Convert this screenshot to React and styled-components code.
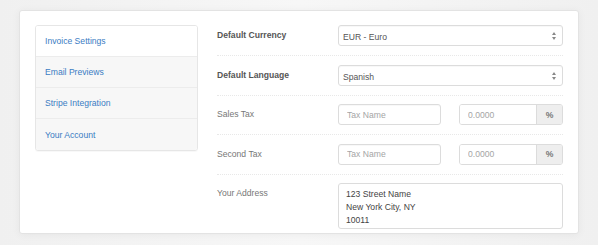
import React from 'react';
import styled, { createGlobalStyle } from 'styled-components';

const GlobalStyle = createGlobalStyle`
  html, body {
    margin: 0;
    padding: 0;
    background: #f4f4f4;
    font-family: "Liberation Sans", Arial, sans-serif;
  }
  * { box-sizing: border-box; }
`

const Page = styled.div`
  width: 598px;
  height: 245px;
  padding: 10px 19px 11px 19px;
  background: linear-gradient(to right, #f0f0f0, #f7f7f7 50%, #f0f0f0);
`
const Card = styled.div`
  display: flex;
  align-items: flex-start;
  gap: 19px;
  height: 224px;
  padding: 14px 15px 0 15px;
  background: #fff;
  border: 1px solid #e3e3e3;
  border-radius: 3px;
  box-shadow: 0 1px 8px rgba(0, 0, 0, 0.05);
  overflow: hidden;
`
const Sidebar = styled.ul`
  flex: 0 0 163px;
  margin: 0;
  padding: 0;
  list-style: none;
  border: 1px solid #e6e6e6;
  border-radius: 3px;
  overflow: hidden;
  box-shadow: 0 1px 1px rgba(0, 0, 0, 0.03);
`
const NavItem = styled.li`
  height: 31px;
  display: flex;
  align-items: center;
  padding-left: 9px;
  font-size: 8.6px;
  color: #3a7cc3;
  background: ${({ active }) => (active ? '#fff' : '#f7f7f7')};
  border-bottom: 1px solid #ececec;
  &:last-child { border-bottom: none; }
`
const Form = styled.div`
  flex: 0 0 346px;
  display: flex;
  flex-direction: column;
`
const Row = styled.div`
  display: grid;
  grid-template-columns: 121px 1fr;
  align-items: start;
  padding-bottom: 9px;
  margin-bottom: 8.5px;
  border-bottom: 1px dotted #e8e8e8;
  &:last-child { border-bottom: none; margin-bottom: 0; }
`
const Label = styled.div`
  line-height: 21px;
  font-size: 8.6px;
  font-weight: ${({ strong }) => (strong ? 700 : 400)};
  color: ${({ strong }) => (strong ? '#555' : '#777')};
`
const SelectBox = styled.div`
  position: relative;
  height: 21px;
  border: 1px solid #dcdcdc;
  border-radius: 3px;
  background: #fff;
  box-shadow: inset 0 1px 1px rgba(0, 0, 0, 0.03);
`
const Select = styled.select`
  appearance: none;
  width: 100%;
  height: 100%;
  border: none;
  background: transparent;
  padding: 0 0 0 4px;
  font-family: inherit;
  font-size: 8.6px;
  color: #555;
  outline: none;
`
const Arrows = styled.svg`
  position: absolute;
  right: 6px;
  top: 6px;
  pointer-events: none;
`
const TaxControls = styled.div`
  display: flex;
  gap: 18px;
`
const Input = styled.input`
  width: ${({ w }) => w}px;
  height: 21px;
  border: 1px solid #dcdcdc;
  border-radius: 3px;
  padding: 0 8px;
  font-family: inherit;
  font-size: 8.6px;
  color: #555;
  box-shadow: inset 0 1px 1px rgba(0, 0, 0, 0.03);
  outline: none;
  &::placeholder { color: #a5a5a5; }
`
const Group = styled.div`
  display: flex;
  width: 104px;
  height: 21px;
  border: 1px solid #dcdcdc;
  border-radius: 3px;
  overflow: hidden;
`
const GroupInput = styled.input`
  flex: 1;
  min-width: 0;
  border: none;
  padding: 0 8px;
  font-family: inherit;
  font-size: 8.6px;
  color: #555;
  outline: none;
  &::placeholder { color: #a5a5a5; }
`
const Addon = styled.span`
  flex: 0 0 26px;
  display: flex;
  align-items: center;
  justify-content: center;
  background: #eee;
  border-left: 1px solid #dcdcdc;
  font-size: 8.6px;
  font-weight: 700;
  color: #777;
`
const Textarea = styled.textarea`
  display: block;
  width: 100%;
  height: 46px;
  resize: none;
  border: 1px solid #dcdcdc;
  border-radius: 3px;
  padding: 4px 7px;
  font-family: inherit;
  font-size: 8.6px;
  line-height: 13px;
  color: #444;
  outline: none;
  overflow: hidden;
`

const SelectField = ({ value, options }) => (
  <SelectBox>
    <Select defaultValue={value}>
      {options.map(o => <option key={o}>{o}</option>)}
    </Select>
    <Arrows width="4" height="8" viewBox="0 0 4 8">
      <path d="M2 0 L4 3 L0 3 Z M0 5 L4 5 L2 8 Z" fill="#888" />
    </Arrows>
  </SelectBox>
)

const TaxRow = ({ label }) => (
  <Row>
    <Label>{label}</Label>
    <TaxControls>
      <Input w={103} placeholder="Tax Name" />
      <Group>
        <GroupInput placeholder="0.0000" />
        <Addon>%</Addon>
      </Group>
    </TaxControls>
  </Row>
)

export default function App() {
  const nav = ['Invoice Settings', 'Email Previews', 'Stripe Integration', 'Your Account'];
  return (
    <>
      <GlobalStyle />
      <Page>
        <Card>
          <Sidebar>
            {nav.map((n, i) => <NavItem key={n} active={i === 0}>{n}</NavItem>)}
          </Sidebar>
          <Form>
            <Row>
              <Label strong>Default Currency</Label>
              <SelectField value="EUR - Euro" options={['USD - US Dollar', 'EUR - Euro', 'GBP - British Pound']} />
            </Row>
            <Row>
              <Label strong>Default Language</Label>
              <SelectField value="Spanish" options={['English', 'Spanish', 'French', 'German']} />
            </Row>
            <TaxRow label="Sales Tax" />
            <TaxRow label="Second Tax" />
            <Row>
              <Label>Your Address</Label>
              <Textarea defaultValue={'123 Street Name\nNew York City, NY\n10011'} />
            </Row>
          </Form>
        </Card>
      </Page>
    </>
  );
}
